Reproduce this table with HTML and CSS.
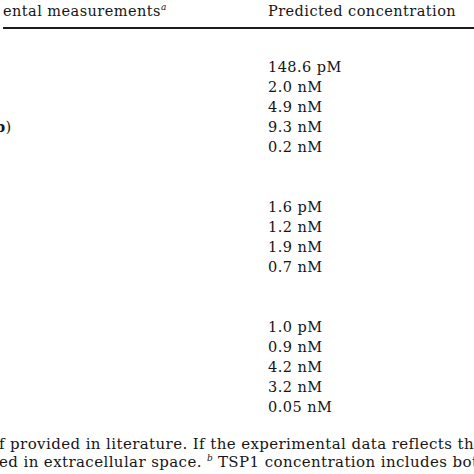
FILE: index.html
```html
<!DOCTYPE html>
<html>
<head>
<meta charset="utf-8">
<link rel="stylesheet" href="styles.css">
</head>
<body>
<div class="page">
  <div class="table">
    <div class="head">
      <div class="cell label">ental measurements<sup>a</sup></div>
      <div class="cell value">Predicted concentration</div>
    </div>
    <div class="body">
      <div class="cell label"></div><div class="cell value"></div>
      <div class="cell label"></div><div class="cell value">148.6 pM</div>
      <div class="cell label"></div><div class="cell value">2.0 nM</div>
      <div class="cell label"></div><div class="cell value">4.9 nM</div>
      <div class="cell label"><span class="tail"><b>b</b>)</span></div><div class="cell value">9.3 nM</div>
      <div class="cell label"></div><div class="cell value">0.2 nM</div>
      <div class="cell label"></div><div class="cell value"></div>
      <div class="cell label"></div><div class="cell value"></div>
      <div class="cell label"></div><div class="cell value">1.6 pM</div>
      <div class="cell label"></div><div class="cell value">1.2 nM</div>
      <div class="cell label"></div><div class="cell value">1.9 nM</div>
      <div class="cell label"></div><div class="cell value">0.7 nM</div>
      <div class="cell label"></div><div class="cell value"></div>
      <div class="cell label"></div><div class="cell value"></div>
      <div class="cell label"></div><div class="cell value">1.0 pM</div>
      <div class="cell label"></div><div class="cell value">0.9 nM</div>
      <div class="cell label"></div><div class="cell value">4.2 nM</div>
      <div class="cell label"></div><div class="cell value">3.2 nM</div>
      <div class="cell label"></div><div class="cell value">0.05 nM</div>
    </div>
  </div>
  <div class="notes">
    <div class="note-line">f provided in literature. If the experimental data reflects the</div>
    <div class="note-line">ed in extracellular space. <sup>b</sup> TSP1 concentration includes both</div>
  </div>
</div>
</body>
</html>
```

FILE: styles.css
```css
html, body {
  margin: 0;
  padding: 0;
  background: #ffffff;
}

.page {
  width: 474px;
  height: 474px;
  overflow: hidden;
  font-family: "DejaVu Serif", "Liberation Serif", serif;
  color: #161616;
}

.head,
.body {
  display: grid;
  grid-template-columns: 268px 1fr;
}

.head {
  padding-top: 1px;
  height: 26px;
  border-bottom: 2px solid #1c1c1c;
  margin-left: 3px;
  grid-template-columns: 265px 1fr;
}

.body {
  padding-top: 8px;
}

.cell {
  font-size: 14.5px;
  line-height: 20px;
  height: 20px;
  letter-spacing: 0.45px;
  white-space: nowrap;
}

sup {
  font-size: 9px;
  font-style: italic;
  line-height: 0;
  vertical-align: 6px;
  letter-spacing: 0;
}

.tail {
  display: inline-block;
  margin-left: -5px;
}

.notes {
  margin-top: 18px;
  font-size: 15px;
  line-height: 18px;
  letter-spacing: 0.4px;
  white-space: nowrap;
  margin-left: -1px;
}
```
